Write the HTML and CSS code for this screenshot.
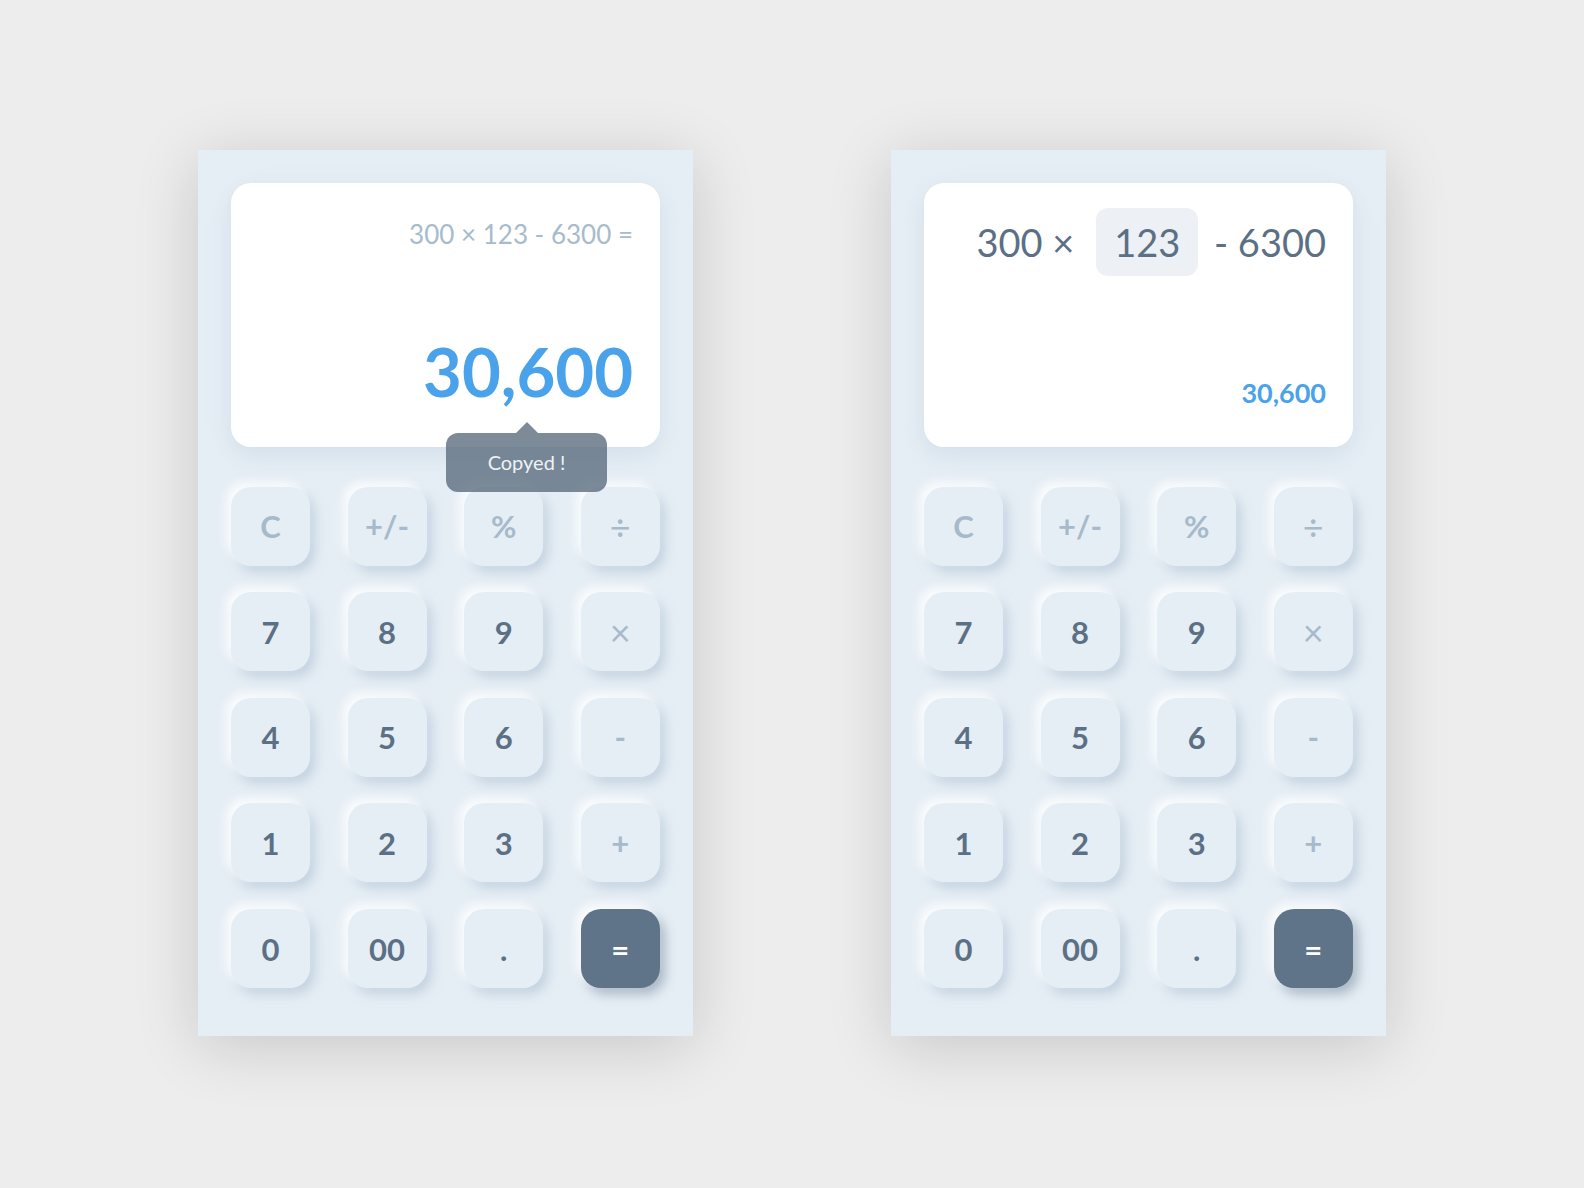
FILE: index.html
```html
<!DOCTYPE html>
<html lang="en">
<head>
    <meta charset="UTF-8">
    <meta name="viewport" content="width=device-width, initial-scale=1.0">
    <title>Calculator</title>
    <link rel="stylesheet" href="styles.css">
</head>
<body>
    <div class="stage">
        <!-- Calculator showing the result, copied to clipboard -->
        <section class="calc">
            <div class="display display-result">
                <div class="expression">300 × 123 - 6300 =</div>
                <div class="result">30,600</div>
                <div class="tooltip">Copyed !</div>
            </div>
            <div class="keypad">
                <button class="key op">C</button>
                <button class="key op">+/-</button>
                <button class="key op">%</button>
                <button class="key op sym">÷</button>
                <button class="key">7</button>
                <button class="key">8</button>
                <button class="key">9</button>
                <button class="key op sym">×</button>
                <button class="key">4</button>
                <button class="key">5</button>
                <button class="key">6</button>
                <button class="key op">-</button>
                <button class="key">1</button>
                <button class="key">2</button>
                <button class="key">3</button>
                <button class="key op">+</button>
                <button class="key">0</button>
                <button class="key">00</button>
                <button class="key">.</button>
                <button class="key equals">=</button>
            </div>
        </section>

        <!-- Calculator while editing an operand -->
        <section class="calc">
            <div class="display display-edit">
                <div class="expression-edit">300 × <span class="pick">123</span> - 6300</div>
                <div class="result-small">30,600</div>
            </div>
            <div class="keypad">
                <button class="key op">C</button>
                <button class="key op">+/-</button>
                <button class="key op">%</button>
                <button class="key op sym">÷</button>
                <button class="key">7</button>
                <button class="key">8</button>
                <button class="key">9</button>
                <button class="key op sym">×</button>
                <button class="key">4</button>
                <button class="key">5</button>
                <button class="key">6</button>
                <button class="key op">-</button>
                <button class="key">1</button>
                <button class="key">2</button>
                <button class="key">3</button>
                <button class="key op">+</button>
                <button class="key">0</button>
                <button class="key">00</button>
                <button class="key">.</button>
                <button class="key equals">=</button>
            </div>
        </section>
    </div>
</body>
</html>
```

FILE: styles.css
```css
/* Basic reset */
* {
    margin: 0;
    padding: 0;
    box-sizing: border-box;
}

html, body {
    width: 100%;
    height: 100%;
}

body {
    font-family: Lato, "Open Sans", sans-serif;
    background-color: #ededed;
    display: flex;
    justify-content: center;
    align-items: center;
}

/* Two calculators side by side */
.stage {
    display: flex;
    gap: 198px;
    margin-bottom: 2px;
}

/* Calculator body */
.calc {
    width: 495px;
    height: 886px;
    background-color: #e6eef5;
    padding: 33px 33px 48px;
    display: flex;
    flex-direction: column;
    gap: 40px;
    box-shadow: 0 10px 60px rgba(0, 0, 0, 0.16);
}

/* White display card */
.display {
    position: relative;
    height: 264px;
    background-color: #fff;
    border-radius: 20px;
    box-shadow: 0 8px 24px rgba(165, 188, 210, 0.3);
    display: flex;
    flex-direction: column;
    justify-content: space-between;
    align-items: flex-end;
}

.display-result {
    padding: 35px 27px 41px;
}

.display-edit {
    padding: 25px 27px 38px;
}

.expression {
    font-size: 26px;
    line-height: 32px;
    color: #a7bbcd;
}

.result {
    font-size: 67px;
    line-height: 70px;
    font-weight: 700;
    color: #4aa2ea;
}

.expression-edit {
    font-size: 38px;
    line-height: 68px;
    color: #5b7085;
}

/* Operand being edited */
.pick {
    display: inline-block;
    padding: 0 18px;
    margin: 0 6px 0 12px;
    background-color: #edf0f4;
    border-radius: 12px;
}

.result-small {
    font-size: 27px;
    line-height: 32px;
    font-weight: 700;
    color: #4aa2ea;
}

/* "Copyed !" bubble under the result */
.tooltip {
    position: absolute;
    top: 250px;
    right: 53px;
    width: 161px;
    height: 59px;
    border-radius: 12px;
    background-color: rgba(88, 106, 124, 0.78);
    color: #eef2f6;
    font-size: 20px;
    line-height: 59px;
    text-align: center;
}

.tooltip::before {
    content: "";
    position: absolute;
    top: -11px;
    left: 50%;
    margin-left: -11px;
    border-left: 11px solid transparent;
    border-right: 11px solid transparent;
    border-bottom: 11px solid rgba(88, 106, 124, 0.78);
}

/* Keys */
.keypad {
    display: grid;
    grid-template-columns: repeat(4, 79px);
    grid-auto-rows: 79px;
    column-gap: 37.6px;
    row-gap: 26.6px;
}

.key {
    border: none;
    border-radius: 20px;
    background-color: #e6eef5;
    font-family: Lato, "Open Sans", sans-serif;
    font-size: 31px;
    font-weight: 700;
    color: #5b7085;
    box-shadow: -5px -5px 10px rgba(255, 255, 255, 0.85),
                5px 6px 12px rgba(160, 184, 205, 0.5);
}

.key.op {
    color: #a7bacc;
}

/* × and ÷ glyphs are small in this font */
.key.sym {
    font-size: 36px;
    font-weight: 400;
}

.key.equals {
    background-color: #5f7489;
    color: #fff;
    box-shadow: -5px -5px 10px rgba(255, 255, 255, 0.85),
                5px 6px 12px rgba(90, 112, 135, 0.45);
}
```
